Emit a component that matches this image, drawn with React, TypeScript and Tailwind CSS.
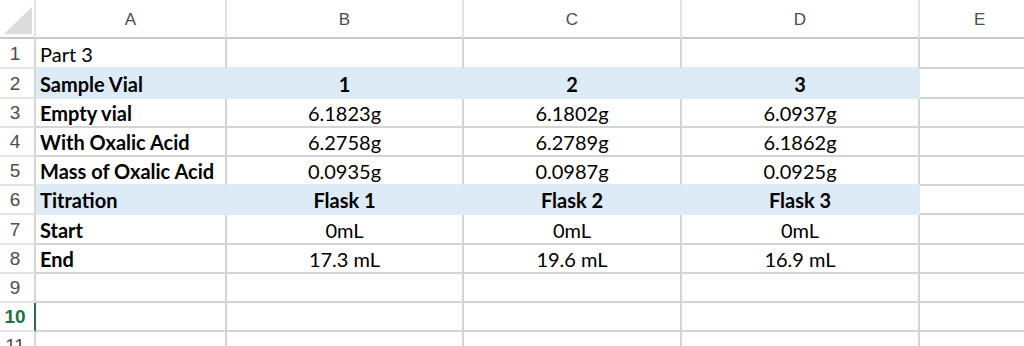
import React from "react";

type Row = {
  n: string;
  h: string;
  cells: string[];
  blue?: boolean;
  boldAll?: boolean;
  boldA?: boolean;
  selected?: boolean;
};

const rows: Row[] = [
  { n: "1", h: "h-[30px]", cells: ["Part 3", "", "", ""] },
  { n: "2", h: "h-[30px]", cells: ["Sample Vial", "1", "2", "3"], blue: true, boldAll: true },
  { n: "3", h: "h-[29px]", cells: ["Empty vial", "6.1823g", "6.1802g", "6.0937g"], boldA: true },
  { n: "4", h: "h-[29px]", cells: ["With Oxalic Acid", "6.2758g", "6.2789g", "6.1862g"], boldA: true },
  { n: "5", h: "h-[29px]", cells: ["Mass of Oxalic Acid", "0.0935g", "0.0987g", "0.0925g"], boldA: true },
  { n: "6", h: "h-[29px]", cells: ["Titration", "Flask 1", "Flask 2", "Flask 3"], blue: true, boldAll: true },
  { n: "7", h: "h-[30px]", cells: ["Start", "0mL", "0mL", "0mL"], boldA: true },
  { n: "8", h: "h-[29px]", cells: ["End", "17.3 mL", "19.6 mL", "16.9 mL"], boldA: true },
  { n: "9", h: "h-[29px]", cells: ["", "", "", ""] },
  { n: "10", h: "h-[29px]", cells: ["", "", "", ""], selected: true },
  { n: "11", h: "h-[29px]", cells: ["", "", "", ""] },
];

const colW = ["w-[191px]", "w-[237px]", "w-[218px]", "w-[238px]"];
const letters = ["A", "B", "C", "D"];

export default function App() {
  return (
    <div
      className="w-[1024px] h-[346px] overflow-hidden bg-white flex flex-col"
      style={{ fontFamily: "Lato, 'Open Sans', sans-serif" }}
    >
      {/* column header */}
      <div className="flex h-[39px] shrink-0">
        <div className="w-[36px] shrink-0 border-r-2 border-b-2 border-r-[#e3e3e3] border-b-[#c9c9c9] bg-white relative">
          <svg width="34" height="37" className="absolute left-0 top-0">
            <polygon points="4,34 32,34 32,7" fill="#dcdcdc" />
          </svg>
        </div>
        {letters.map((l, i) => (
          <div
            key={l}
            className={`${colW[i]} shrink-0 border-r-2 border-b-2 border-r-[#e3e3e3] border-b-[#c9c9c9] bg-white flex items-center justify-center pt-[2px] text-[17px] text-[#4d4d4d]`}
            style={{ fontFamily: "'Liberation Sans', Arial, sans-serif" }}
          >
            {l}
          </div>
        ))}
        <div
          className="flex-1 border-b-2 border-b-[#c9c9c9] bg-white flex items-center justify-start pt-[2px] pl-[54px] text-[17px] text-[#4d4d4d]"
          style={{ fontFamily: "'Liberation Sans', Arial, sans-serif" }}
        >
          E
        </div>
      </div>

      {rows.map((r, ri) => {
        const nextBlue = rows[ri + 1]?.blue;
        return (
          <div key={r.n} className={`flex ${r.h} shrink-0`}>
            <div
              className={`w-[36px] shrink-0 border-b-2 border-b-[#e3e3e3] border-r-2 ${
                r.selected ? "border-r-[#217346] text-[#217346] font-bold" : "border-r-[#d6d6d6] text-[#4d4d4d]"
              } bg-white flex items-end justify-center pr-[4px] pb-[2px] text-[19px] leading-[22px]`}
              style={{ fontFamily: "'Liberation Sans', Arial, sans-serif" }}
            >
              {r.n}
            </div>
            {r.cells.map((c, ci) => {
              const bold = r.boldAll || (ci === 0 && r.boldA);
              const bg = r.blue ? "bg-[#ddebf7]" : "bg-white";
              const br = r.blue ? "border-r-[#ddebf7]" : "border-r-[#d4d4d4]";
              const bb = r.blue || nextBlue ? "border-b-[#ddebf7]" : "border-b-[#d4d4d4]";
              return (
                <div
                  key={ci}
                  className={`${colW[ci]} shrink-0 border-r-2 border-b-2 ${br} ${bb} ${bg} flex items-end pb-[2px] text-[20px] leading-[22px] text-black whitespace-nowrap ${
                    ci === 0 ? "justify-start pl-[4px]" : "justify-center"
                  } ${bold ? "font-bold" : "font-normal"}`}
                >
                  {c}
                </div>
              );
            })}
            <div className="flex-1 border-b-2 border-b-[#d4d4d4] bg-white" />
          </div>
        );
      })}
    </div>
  );
}
